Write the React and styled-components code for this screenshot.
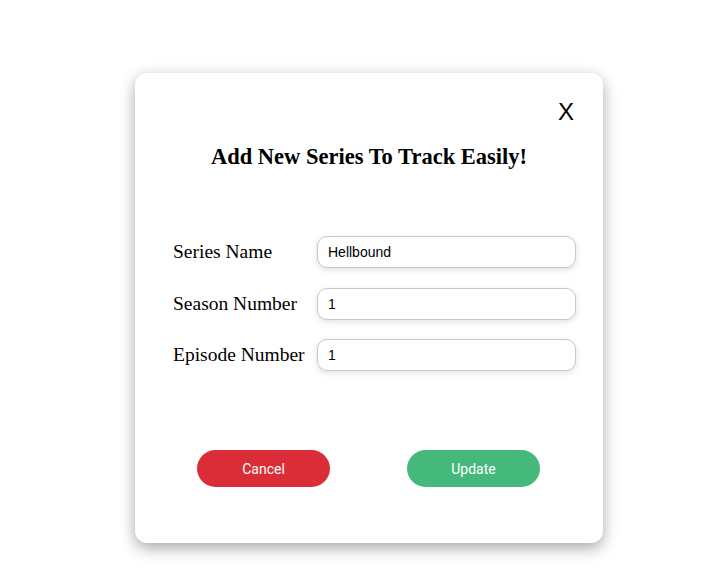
import React from 'react';
import styled, { createGlobalStyle } from 'styled-components';

const Global = createGlobalStyle`
    body {
        margin: 0;
        background: #fff;
        font-family: "Liberation Serif", "Times New Roman", serif;
    }
`;

export default function App() {
    return (
        <Page>
            <Global/>
            <Modal>
                <CloseRow>
                    <Close type="button">X</Close>
                </CloseRow>
                <Title>Add New Series To Track Easily!</Title>
                <Form>
                    <Row>
                        <Label>Series Name</Label>
                        <Input type="text" defaultValue="Hellbound"/>
                    </Row>
                    <Row>
                        <Label>Season Number</Label>
                        <Input type="text" defaultValue="1"/>
                    </Row>
                    <Row>
                        <Label>Episode Number</Label>
                        <Input type="text" defaultValue="1"/>
                    </Row>
                </Form>
                <Footer>
                    <Button type="button" color="#db2d38">Cancel</Button>
                    <Button type="button" color="#45b97c">Update</Button>
                </Footer>
            </Modal>
        </Page>
    );
}

const Page = styled.div`
    min-height: 575px;
    padding: 73px 0 0 135px;
    box-sizing: border-box;
`

const Modal = styled.div`
    width: 468px;
    height: 470px;
    background: #fff;
    border-radius: 12px;
    box-shadow: rgba(0, 0, 0, 0.35) 0px 5px 15px;
    display: flex;
    flex-direction: column;
    box-sizing: border-box;
    padding-top: 25px;
`

const CloseRow = styled.div`
    display: flex;
    justify-content: flex-end;
    padding-right: 29px;
`

const Close = styled.button`
    background: transparent;
    border: none;
    padding: 0;
    font-family: "Liberation Sans", Arial, sans-serif;
    font-size: 24px;
    color: #000;
    cursor: pointer;
`

const Title = styled.h2`
    margin: 18px 0 0;
    text-align: center;
    font-size: 22.5px;
    font-weight: bold;
`

const Form = styled.div`
    display: flex;
    flex-direction: column;
    gap: 19.5px;
    margin-top: 66px;
    padding-left: 38px;
`

const Row = styled.div`
    display: flex;
    align-items: center;
`

const Label = styled.label`
    width: 144px;
    font-size: 19.5px;
    white-space: nowrap;
`

const Input = styled.input`
    width: 259px;
    height: 32px;
    box-sizing: border-box;
    border: 1px solid #c8c8c8;
    border-radius: 10px;
    padding: 0 10px;
    font-family: "Liberation Sans", Arial, sans-serif;
    font-size: 14px;
    color: #000;
    box-shadow: 0 2px 6px rgba(0, 0, 0, 0.12);
    outline: none;
`

const Footer = styled.div`
    display: flex;
    gap: 77px;
    margin-top: 79px;
    padding-left: 62px;
`

const Button = styled.button`
    width: 133px;
    height: 37px;
    border: none;
    border-radius: 19px;
    background: ${p => p.color};
    color: #fff;
    font-family: Roboto, "Liberation Sans", sans-serif;
    font-size: 14px;
    cursor: pointer;
`
